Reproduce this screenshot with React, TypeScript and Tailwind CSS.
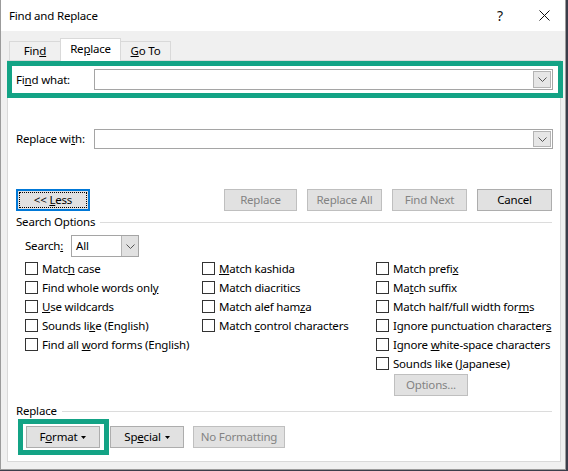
import React from "react";

function Chevron() {
  return (
    <svg width="9" height="5" viewBox="0 0 9 5" className="block">
      <polyline points="0.5,0.5 4.5,4.5 8.5,0.5" fill="none" stroke="#555" strokeWidth="1" />
    </svg>
  );
}

function Tri() {
  return (
    <svg width="5" height="3" viewBox="0 0 5 3" className="block ml-[4px]">
      <polygon points="0,0 5,0 2.5,3" fill="#000" />
    </svg>
  );
}

function Combo({ w, h }: { w: string; h: string }) {
  return (
    <div className={`${w} ${h} border border-[#a5a5a5] bg-white flex justify-end p-px shrink-0`}>
      <div className="w-[18px] h-full border border-[#b4b4b4] bg-[#e6e6e6] flex items-center justify-center">
        <Chevron />
      </div>
    </div>
  );
}

function Check({ children }: { children: React.ReactNode }) {
  return (
    <div className="h-[19px] flex items-center">
      <span className="w-[13px] h-[13px] border border-[#333] bg-white shrink-0" />
      <span className="ml-[4px] whitespace-nowrap">{children}</span>
    </div>
  );
}

function Btn({
  children,
  disabled,
  w,
}: {
  children: React.ReactNode;
  disabled?: boolean;
  w: string;
}) {
  return (
    <div
      className={`${w} h-[22px] flex items-center justify-center border bg-[#e1e1e1] whitespace-nowrap shrink-0 ${
        disabled ? "border-[#bfbfbf] text-[#838383]" : "border-[#adadad] text-black"
      }`}
    >
      {children}
    </div>
  );
}

export default function App() {
  return (
    <div className="w-[568px] h-[471px] bg-[#3b3d4a] overflow-hidden font-['Noto_Sans',sans-serif] text-[11.5px] tracking-[-0.2px] leading-none text-black">
      <div className="w-[566px] h-[470px] bg-[#f0f0f0] border-x border-b border-[#9b9b9b] flex flex-col">
        {/* Title bar */}
        <div className="h-[31px] bg-white flex items-center shrink-0">
          <span className="ml-[8px]">Find and Replace</span>
          <span className="ml-auto text-[14px] text-[#111]">?</span>
          <svg width="11" height="11" viewBox="0 0 11 11" className="ml-[36px] mr-[15px] block">
            <path d="M0.5 0.5 L10.5 10.5 M10.5 0.5 L0.5 10.5" stroke="#111" strokeWidth="1" fill="none" />
          </svg>
        </div>

        {/* Tabs */}
        <div className="h-[29px] flex items-end pl-[8px] shrink-0 relative z-10">
          <div className="w-[51px] h-[19px] border border-r-0 border-b-0 border-[#d9d9d9] flex items-center justify-center">
            <span>
              Fin<u>d</u>
            </span>
          </div>
          <div className="w-[61px] h-[23px] -mb-px border border-b-0 border-[#d9d9d9] bg-white flex items-center justify-center pb-[2px]">
            <span>
              Re<u>p</u>lace
            </span>
          </div>
          <div className="w-[50px] h-[19px] border border-l-0 border-b-0 border-[#d9d9d9] flex items-center justify-center">
            <span>
              <u>G</u>o To
            </span>
          </div>
        </div>

        {/* Panel */}
        <div className="ml-[6px] w-[554px] h-[402px] border border-[#d9d9d9] bg-white flex flex-col shrink-0">
          {/* Find what (highlighted) */}
          <div className="-ml-px w-[556px] h-[37px] border-[5px] border-[#13a385] bg-white flex items-center pl-[4px] shrink-0">
            <span className="w-[78px] shrink-0">
              Fi<u>n</u>d what:
            </span>
            <Combo w="w-[459px]" h="h-[21px]" />
          </div>

          {/* Replace with */}
          <div className="mt-[31px] h-[20px] flex items-center pl-[8px] shrink-0">
            <span className="w-[78px] shrink-0">
              Replace wi<u>t</u>h:
            </span>
            <Combo w="w-[459px]" h="h-[20px]" />
          </div>

          {/* Buttons row */}
          <div className="mt-[40px] h-[22px] flex items-center pl-[8px] pr-[8px] shrink-0">
            <div className="w-[74px] h-[22px] border-2 border-[#0078d7] bg-[#e1e1e1] p-px flex shrink-0">
              <div className="flex-1 border border-dotted border-black flex items-center justify-center">
                <span>
                  &lt;&lt; <u>L</u>ess
                </span>
              </div>
            </div>
            <div className="ml-auto flex gap-[10px]">
              <Btn w="w-[73px]" disabled>
                Replace
              </Btn>
              <Btn w="w-[75px]" disabled>
                Replace All
              </Btn>
              <Btn w="w-[75px]" disabled>
                Find Next
              </Btn>
              <Btn w="w-[75px]">Cancel</Btn>
            </div>
          </div>

          {/* Search Options header */}
          <div className="mt-[3px] h-[16px] flex items-center pl-[8px] pr-[8px] shrink-0">
            <span className="whitespace-nowrap">Search Options</span>
            <div className="flex-1 h-px bg-[#dcdcdc] ml-[5px]" />
          </div>

          {/* Search select */}
          <div className="mt-[5px] h-[22px] flex items-center pl-[17px] shrink-0">
            <span className="w-[46px] shrink-0">
              Search<u>:</u>
            </span>
            <div className="w-[68px] h-[22px] border border-[#a5a5a5] bg-white flex shrink-0">
              <span className="flex-1 flex items-center pl-[4px]">All</span>
              <div className="w-[17px] h-full border-l border-[#b4b4b4] bg-[#e1e1e1] flex items-center justify-center">
                <Chevron />
              </div>
            </div>
          </div>

          {/* Checkbox columns */}
          <div className="mt-[2px] flex pl-[17px] shrink-0">
            <div className="w-[177px] shrink-0 flex flex-col">
              <Check>
                Matc<u>h</u> case
              </Check>
              <Check>
                Find whole words onl<u>y</u>
              </Check>
              <Check>
                <u>U</u>se wildcards
              </Check>
              <Check>
                Sounds li<u>k</u>e (English)
              </Check>
              <Check>
                Find all <u>w</u>ord forms (English)
              </Check>
            </div>
            <div className="w-[174px] shrink-0 flex flex-col">
              <Check>
                <u>M</u>atch kashida
              </Check>
              <Check>Match diacritics</Check>
              <Check>
                Match alef ham<u>z</u>a
              </Check>
              <Check>
                Match <u>c</u>ontrol characters
              </Check>
            </div>
            <div className="shrink-0 flex flex-col">
              <Check>
                Match prefi<u>x</u>
              </Check>
              <Check>
                Ma<u>t</u>ch suffix
              </Check>
              <Check>
                Match half/full width for<u>m</u>s
              </Check>
              <Check>
                Ignore punctuation character<u>s</u>
              </Check>
              <Check>
                Ignore <u>w</u>hite-space characters
              </Check>
              <Check>
                Sounds like (<u>J</u>apanese)
              </Check>
              <div className="mt-px ml-[18px]">
                <Btn w="w-[74px]" disabled>
                  Options...
                </Btn>
              </div>
            </div>
          </div>

          {/* Replace header */}
          <div className="mt-[7px] h-[16px] flex items-center pl-[8px] pr-[8px] shrink-0">
            <span>Replace</span>
            <div className="flex-1 h-px bg-[#dcdcdc] ml-[5px]" />
          </div>

          {/* Format row */}
          <div className="h-[36px] flex items-center pl-[10px] shrink-0">
            <div className="w-[91px] h-[36px] border-[5px] border-[#13a385] bg-white flex items-center pl-[3px] shrink-0">
              <Btn w="w-[74px]">
                <span>
                  F<u>o</u>rmat
                </span>
                <Tri />
              </Btn>
            </div>
            <div className="ml-[1px]">
              <Btn w="w-[74px]">
                <span>
                  Sp<u>e</u>cial
                </span>
                <Tri />
              </Btn>
            </div>
            <div className="ml-[9px]">
              <Btn w="w-[92px]" disabled>
                No Formatting
              </Btn>
            </div>
          </div>
        </div>
      </div>
    </div>
  );
}
